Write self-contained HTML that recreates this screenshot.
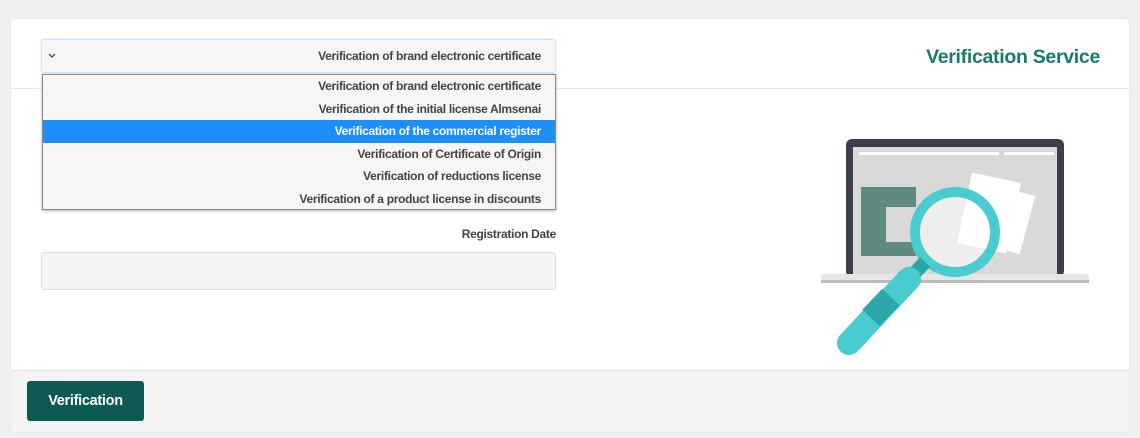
<!DOCTYPE html>
<html><head><meta charset="utf-8"><style>
*{box-sizing:border-box;margin:0;padding:0}
body{width:1140px;height:438px;background:#efefef;font-family:"Liberation Sans",sans-serif;position:relative;overflow:hidden}
.card{position:absolute;left:11px;top:19px;width:1118px;height:413px;background:#fff;border-radius:4px;box-shadow:0 0 1px #ddd;overflow:hidden}
.hl{position:absolute;left:0;top:69px;width:100%;height:1px;background:#e8e8e8}
.foot{position:absolute;left:0;top:351px;width:100%;height:62px;background:#f4f4f4;border-top:1px solid #e6e6e6}
.title{position:absolute;right:29px;top:27px;font-size:19.5px;font-weight:bold;color:#1a7a6a;letter-spacing:-0.3px}
.sel{position:absolute;left:30px;top:20px;width:515px;height:34px;background:#f6f6f6;border:1px solid #d6e4f0;border-radius:3px;box-shadow:0 0 2px #cfe3f7}
.t{font-size:12px;font-weight:bold;color:#444;letter-spacing:-0.3px;text-align:right}
.sel .t{position:absolute;right:14px;top:9px}
.list{position:absolute;left:31px;top:55px;width:514px;height:136px;background:#f6f6f6;border:1px solid #888;box-shadow:0 1px 3px rgba(0,0,0,.3)}
.it{height:22.6px;line-height:22.6px;padding-right:14px}
.it.a{background:#1e8ff8;color:#fff}
.lab{position:absolute;right:573px;top:208px}
.inp{position:absolute;left:30px;top:233px;width:515px;height:38px;background:#f5f5f5;border:1px solid #e0e0e0;border-radius:3px}
.btn{position:absolute;left:16px;top:362px;width:117px;height:40px;background:#0d5a52;color:#fff;border-radius:3px;font-size:14.5px;font-weight:bold;text-align:center;line-height:40px;letter-spacing:-0.3px}
</style></head><body>
<div class="card">
<div class="hl"></div>
<div class="title">Verification Service</div>
<div class="sel"><svg style="position:absolute;left:6px;top:13px" width="8" height="6"><path d="M1 1L4 4L7 1" stroke="#555" stroke-width="1.4" fill="none"/></svg><div class="t">Verification of brand electronic certificate</div></div>
<div class="list">
<div class="it t">Verification of brand electronic certificate</div>
<div class="it t">Verification of the initial license Almsenai</div>
<div class="it t a">Verification of the commercial register</div>
<div class="it t">Verification of Certificate of Origin</div>
<div class="it t">Verification of reductions license</div>
<div class="it t">Verification of a product license in discounts</div>
</div>
<div class="lab t">Registration Date</div>
<div class="inp"></div>
<svg style="position:absolute;left:790px;top:100px" width="300" height="250">
<rect x="45" y="20" width="218" height="138" rx="6" fill="#3b3f4a"/>
<rect x="52" y="28" width="204" height="128" fill="#d9d9d9"/>
<rect x="58" y="33" width="140" height="3" fill="#fff"/><rect x="203" y="33" width="50" height="3" fill="#fff"/>
<path d="M60 68h55v20h-30v35h30v14h-55z" fill="#5e8a80"/>
<rect x="163" y="58" width="50" height="72" fill="#fff" transform="rotate(12 188 94)"/>
<rect x="195" y="72" width="32" height="60" fill="#fff" transform="rotate(15 211 102)"/>
<rect x="20" y="155" width="268" height="8" rx="3" fill="#e6e6e6"/>
<rect x="20" y="161" width="268" height="3" fill="#bbb"/>
<circle cx="154" cy="113" r="40" fill="rgba(255,255,255,.55)" stroke="#48ccd0" stroke-width="10"/>
<path d="M124 143L108 160" stroke="#2aa7a9" stroke-width="14"/>
<path d="M108 160L48 224" stroke="#48ccd0" stroke-width="24" stroke-linecap="round"/>
<path d="M90 178L70 199" stroke="#2aa7a9" stroke-width="24"/>
</svg>
<div class="foot"></div>
<div class="btn">Verification</div>
</div>
</body></html>
